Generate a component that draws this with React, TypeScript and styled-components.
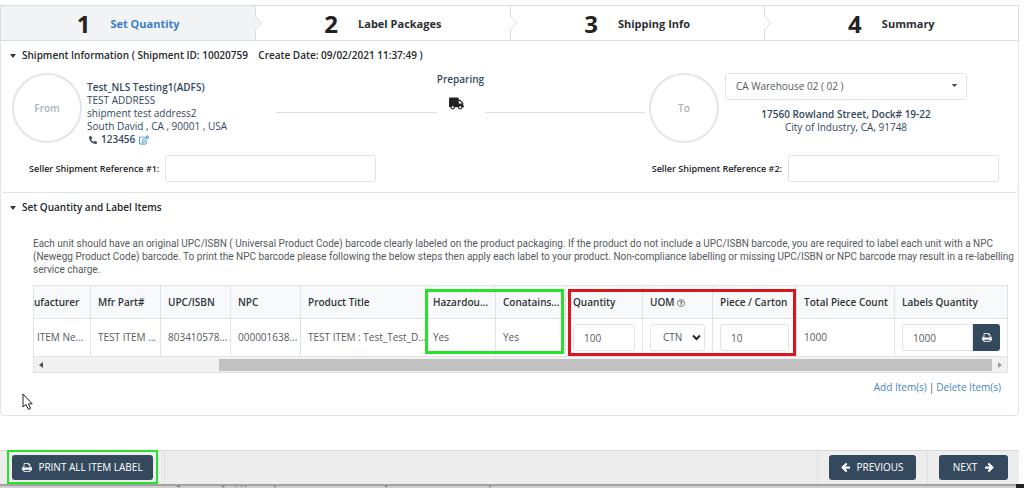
import React from "react";
import styled, { createGlobalStyle } from "styled-components";
import { FaTruck, FaPhoneAlt, FaRegEdit, FaRegQuestionCircle } from "react-icons/fa";

const navy = "#34495e";
const line = "#e1e3e6";

const GlobalStyle = createGlobalStyle`
  * { box-sizing: border-box; }
  body {
    margin: 0;
    background: #fff;
    color: #555a60;
    font: 10px/13px "Open Sans", "Noto Sans", sans-serif;
  }
  input, select, button { font: inherit; color: inherit; }
`;

const Page = styled.div`
  position: relative;
  padding: 5px 5px 0 0;
`;

const Steps = styled.ol`
  display: grid;
  grid-template-columns: repeat(4, 1fr);
  margin: 0;
  padding: 0;
  list-style: none;
  border: 1px solid #dcdee0;
`;

const Step = styled.li<{ $active?: boolean }>`
  position: relative;
  display: flex;
  align-items: center;
  justify-content: center;
  gap: 20px;
  height: 34px;
  background: ${(p) => (p.$active ? "#f1f3f5" : "#fff")};
  color: ${(p) => (p.$active ? "#3f80c4" : "#2b2f33")};
  font-size: 11px;
  font-weight: 700;
  & + & { border-left: 1px solid #dcdee0; }
`;

const StepNumber = styled.span`
  color: #222;
  font-size: 24px;
  font-weight: 700;
`;

const StepArrow = styled.svg`
  position: absolute;
  z-index: 1;
  right: -8px;
  top: 9px;
`;

const Panel = styled.section`
  border: 1px solid ${line};
  border-top-width: 0;
  border-radius: 0 0 4px 4px;
`;

const PanelTitle = styled.h2`
  display: flex;
  align-items: center;
  gap: 6px;
  margin: 0;
  padding: 8px 9px 0;
  color: #24282c;
  font-size: 10px;
  line-height: 13px;
  font-weight: 600;
  white-space: pre;
  &::before {
    content: "";
    border: 3px solid transparent;
    border-top: 4px solid #333;
    border-bottom: 0;
  }
`;

const Route = styled.div`
  display: flex;
  margin-top: 11px;
  padding: 0 51px 0 11px;
`;

const Track = styled.div`
  flex: 1;
  height: 1px;
  margin-top: 39px;
  background: #dcdee0;
`;

const Place = styled.div`
  flex: none;
  display: grid;
  place-items: center;
  width: 70px;
  height: 70px;
  border: 2px solid #e4e5e7;
  border-radius: 50%;
  color: #a9b2bb;
  font-weight: 600;
  ${Track} + & { margin-left: 4px; }
`;

const Origin = styled.address`
  width: 194px;
  padding: 8px 0 0 5px;
  color: ${navy};
  font-style: normal;
  white-space: nowrap;
`;

const Strong = styled.strong`
  font-weight: 600;
`;

const Phone = styled.div`
  display: flex;
  align-items: center;
  gap: 4px;
  padding-left: 2px;
  svg:last-child { color: #3f8fc9; }
`;

const Status = styled.div`
  display: flex;
  flex-direction: column;
  align-items: center;
  gap: 10px;
  width: 48px;
  color: ${navy};
  font-weight: 600;
  svg { color: #222; margin-right: 8px; }
`;

const Destination = styled.div`
  width: 242px;
  margin-left: 6px;
  color: ${navy};
  text-align: center;
`;

const Warehouse = styled.select`
  display: block;
  width: 100%;
  height: 27px;
  margin-bottom: 8px;
  padding: 0 10px;
  border: 1px solid ${line};
  border-radius: 3px;
  background: linear-gradient(#555, #555) no-repeat right 9px top 10px / 5px 1px,
    linear-gradient(#555, #555) no-repeat right 10px top 11px / 3px 1px,
    linear-gradient(#555, #555) no-repeat right 11px top 12px / 1px 1px, #fff;
  color: #555b61;
  appearance: none;
`;

const References = styled.div`
  display: flex;
  justify-content: space-between;
  padding: 9px 19px 10px 28px;
`;

const Reference = styled.label`
  display: flex;
  align-items: center;
  gap: 6px;
  color: #24282c;
  font-size: 9px;
  font-weight: 600;
`;

const TextBox = styled.input<{ $width?: string }>`
  width: ${(p) => p.$width ?? "100%"};
  height: 27px;
  min-width: 0;
  padding: 0 10px;
  border: 1px solid ${line};
  border-radius: 3px;
  background: #fff;
  color: #555b61;
`;

const Note = styled.p`
  margin: 23px 2px 9px 32px;
  font-family: Roboto, "Open Sans", sans-serif;
`;

const GridFrame = styled.div`
  position: relative;
  margin: 0 10px 0 32px;
`;

const Items = styled.table`
  width: 100%;
  table-layout: fixed;
  border-collapse: collapse;
  white-space: nowrap;
  th, td {
    height: 38px;
    padding: 0 7px;
    overflow: hidden;
    border: 1px solid ${line};
    text-align: left;
  }
  th {
    height: 33px;
    background: #f8f9fb;
    color: #2f3439;
    font-weight: 600;
  }
  th:first-child { padding: 0; }
  td:first-child { padding: 0 3px; }
`;

const Col = styled.col<{ $w?: number }>`
  ${(p) => (p.$w ? `width: ${p.$w}px;` : "")}
`;

const Help = styled(FaRegQuestionCircle)`
  color: #666;
  vertical-align: -1px;
`;

const Unit = styled.select`
  width: 100%;
  height: 27px;
  padding: 0 20px 0 12px;
  border: 1px solid ${line};
  border-radius: 3px;
  background: transparent;
  color: #555b61;
  appearance: none;
`;

const UnitField = styled.div`
  position: relative;
  svg { position: absolute; right: 4px; top: 10px; pointer-events: none; }
`;

const LabelField = styled.div`
  display: flex;
  ${TextBox} { flex: 1; border-radius: 3px 0 0 3px; }
`;

const PrintOne = styled.button`
  display: grid;
  place-items: center;
  width: 27px;
  height: 27px;
  padding: 0;
  border: 0;
  border-radius: 0 3px 3px 0;
  background: ${navy};
  color: #fff;
`;

const ScrollBar = styled.div`
  display: flex;
  align-items: center;
  justify-content: space-between;
  height: 16px;
  padding: 0 5px;
  border: 1px solid ${line};
  border-top: 0;
  background: #f1f1f1;
`;

const Thumb = styled.div`
  flex: 1;
  height: 12px;
  margin: 0 6px 0 176px;
  background: #c1c1c1;
`;

const Highlight = styled.div<{ $color: string; $right: number; $w: number; $h: number }>`
  position: absolute;
  top: 4px;
  right: ${(p) => p.$right}px;
  width: ${(p) => p.$w}px;
  height: ${(p) => p.$h}px;
  border: 3px solid ${(p) => p.$color};
  pointer-events: none;
`;

const Actions = styled.div`
  display: flex;
  justify-content: flex-end;
  gap: 2px;
  padding: 8px 17px 21px 0;
`;

const Link = styled.a`
  color: #4586bd;
  text-decoration: none;
`;

const Footer = styled.footer`
  display: flex;
  justify-content: space-between;
  height: 34px;
  margin-top: 34px;
  border-top: 1px solid #d8d8d8;
  background: #ededed;
`;

const FooterCell = styled.div<{ $side: "left" | "right" }>`
  padding: 4px 11px 0 ${(p) => (p.$side === "left" ? 12 : 11)}px;
  border-${(p) => (p.$side === "left" ? "right" : "left")}: 1px solid #e0e0e0;
`;

const FooterGroup = styled.div`
  display: flex;
`;

const Marked = styled.div`
  margin: -5px -5px 0 -5px;
  padding: 3px 3px 2px;
  border: 2px solid #27e22b;
`;

const Button = styled.button<{ $w: number; $gap?: number }>`
  display: flex;
  align-items: center;
  justify-content: center;
  gap: ${(p) => p.$gap ?? 6}px;
  width: ${(p) => p.$w}px;
  height: 25px;
  padding: 0;
  border: 0;
  border-radius: 3px;
  background: ${navy};
  color: #fff;
  white-space: nowrap;
`;

const Backdrop = styled.div`
  display: flex;
  height: 4px;
  margin-right: -5px;
  border-top: 2px solid #a2a2a2;
  background: #cfcfcf;
  &::after {
    content: "";
    width: 8px;
    height: 4px;
    margin: -2px 0 0 auto;
    background: #222;
  }
`;

const Pointer = styled.svg`
  position: absolute;
  left: 22px;
  top: 393px;
`;

const Printer = () => (
  <svg width="10" height="9" viewBox="0 128 1664 1536" fill="currentColor" aria-hidden="true">
    <path d="M384 1536h896v-256h-896v256zM384 896h896v-384h-160q-40 0-68-28t-28-68v-160h-640v640zM1536 960q0-26-19-45t-45-19-45 19-19 45 19 45 45 19 45-19 19-45zM1664 960v416q0 13-9.5 22.5t-22.5 9.5h-224v160q0 40-28 68t-68 28h-960q-40 0-68-28t-28-68v-160h-224q-13 0-22.5-9.5t-9.5-22.5v-416q0-79 56.5-135.5t135.5-56.5h64v-544q0-40 28-68t68-28h672q40 0 88 20t76 48l152 152q28 28 48 76t20 88v256h64q79 0 135.5 56.5t56.5 135.5z" />
  </svg>
);

const Arrow = ({ right = false }: { right?: boolean }) => (
  <svg width="9" height="9" viewBox="0 192 1536 1536" fill="currentColor" aria-hidden="true">
    <path
      transform={right ? "translate(1536 0) scale(-1 1)" : undefined}
      d="M1536 896v128q0 53-32.5 90.5t-84.5 37.5h-704l293 294q38 36 38 90t-38 90l-75 76q-37 37-90 37-52 0-91-37l-651-652q-37-37-37-90 0-52 37-91l651-650q38-38 91-38 52 0 90 38l75 74q38 38 38 91t-38 91l-293 293h704q52 0 84.5 37.5t32.5 90.5z"
    />
  </svg>
);

const steps = ["Set Quantity", "Label Packages", "Shipping Info", "Summary"];
const widths = [57, 70, 70, 70, undefined, 70, 70, 77, 70, 84, 98, 113];

export default function App() {
  return (
    <Page>
      <GlobalStyle />
      <Steps>
        {steps.map((name, i) => (
          <Step key={name} $active={i === 0}>
            <StepNumber>{i + 1}</StepNumber>
            {name}
            {i < 3 && (
              <StepArrow width="9" height="16" viewBox="0 0 9 16">
                <path d="M1 1 L8 8 L1 15" fill={i === 0 ? "#f1f3f5" : "#fff"} stroke="#dcdee0" />
              </StepArrow>
            )}
          </Step>
        ))}
      </Steps>

      <Panel>
        <PanelTitle>{"Shipment Information ( Shipment ID: 10020759    Create Date: 09/02/2021 11:37:49 )"}</PanelTitle>
        <Route>
          <Place>From</Place>
          <Origin>
            <Strong>Test_NLS Testing1(ADFS)</Strong>
            <div>TEST ADDRESS</div>
            <div>shipment test address2</div>
            <div>South David , CA , 90001 , USA</div>
            <Phone>
              <FaPhoneAlt size={8} />
              <Strong>123456</Strong>
              <FaRegEdit size={10} />
            </Phone>
          </Origin>
          <Track />
          <Status>
            Preparing
            <FaTruck size={15} />
          </Status>
          <Track />
          <Place>To</Place>
          <Destination>
            <Warehouse aria-label="Warehouse">
              <option>CA Warehouse 02 ( 02 )</option>
            </Warehouse>
            <Strong>17560 Rowland Street, Dock# 19-22</Strong>
            <div>City of Industry, CA, 91748</div>
          </Destination>
        </Route>
        <References>
          <Reference>
            Seller Shipment Reference #1:
            <TextBox $width="211px" />
          </Reference>
          <Reference>
            Seller Shipment Reference #2:
            <TextBox $width="211px" />
          </Reference>
        </References>
      </Panel>

      <Panel>
        <PanelTitle>Set Quantity and Label Items</PanelTitle>
        <Note>
          Each unit should have an original UPC/ISBN ( Universal Product Code) barcode clearly labeled on the product
          packaging. If the product do not include a UPC/ISBN barcode, you are required to label each unit with a NPC
          (Newegg Product Code) barcode. To print the NPC barcode please following the below steps then apply each
          label to your product. Non-compliance labelling or missing UPC/ISBN or NPC barcode may result in a
          re-labelling service charge.
        </Note>
        <GridFrame>
          <Items>
            <colgroup>
              {widths.map((w, i) => (
                <Col key={i} $w={w} />
              ))}
            </colgroup>
            <thead>
              <tr>
                <th>ufacturer</th>
                <th>Mfr Part#</th>
                <th>UPC/ISBN</th>
                <th>NPC</th>
                <th>Product Title</th>
                <th>Hazardou...</th>
                <th>Conatains...</th>
                <th>Quantity</th>
                <th>
                  UOM <Help size={8} />
                </th>
                <th>Piece / Carton</th>
                <th>Total Piece Count</th>
                <th>Labels Quantity</th>
              </tr>
            </thead>
            <tbody>
              <tr>
                <td>ITEM Ne...</td>
                <td>TEST ITEM ...</td>
                <td>803410578...</td>
                <td>000001638...</td>
                <td>TEST ITEM : Test_Test_D...</td>
                <td>Yes</td>
                <td>Yes</td>
                <td>
                  <TextBox aria-label="Quantity" defaultValue="100" />
                </td>
                <td>
                  <UnitField>
                    <Unit aria-label="UOM">
                      <option>CTN</option>
                    </Unit>
                    <svg width="9" height="7" viewBox="0 0 9 7">
                      <path d="M1 1.5 L4.5 5 L8 1.5" fill="none" stroke="#222" strokeWidth="2" />
                    </svg>
                  </UnitField>
                </td>
                <td>
                  <TextBox aria-label="Piece per carton" defaultValue="10" />
                </td>
                <td>1000</td>
                <td>
                  <LabelField>
                    <TextBox aria-label="Labels quantity" defaultValue="1000" />
                    <PrintOne aria-label="Print label">
                      <Printer />
                    </PrintOne>
                  </LabelField>
                </td>
              </tr>
            </tbody>
          </Items>
          <ScrollBar>
            <svg width="4" height="6" viewBox="0 0 4 6">
              <path d="M4 0 V6 L0 3 Z" fill="#505050" />
            </svg>
            <Thumb />
            <svg width="4" height="6" viewBox="0 0 4 6">
              <path d="M0 0 V6 L4 3 Z" fill="#999" />
            </svg>
          </ScrollBar>
          <Highlight $color="#27e22b" $right={444} $w={139} $h={65} />
          <Highlight $color="#d9161c" $right={212} $w={228} $h={67} />
        </GridFrame>
        <Actions>
          <Link href="#add">Add Item(s)</Link>|<Link href="#delete">Delete Item(s)</Link>
        </Actions>
      </Panel>

      <Footer>
        <FooterCell $side="left">
          <Marked>
            <Button $w={141}>
              <Printer />
              PRINT ALL ITEM LABEL
            </Button>
          </Marked>
        </FooterCell>
        <FooterGroup>
          <FooterCell $side="right">
            <Button $w={87}>
              <Arrow />
              PREVIOUS
            </Button>
          </FooterCell>
          <FooterCell $side="right">
            <Button $w={69} $gap={8}>
              NEXT
              <Arrow right />
            </Button>
          </FooterCell>
        </FooterGroup>
      </Footer>
      <Backdrop>
        <svg width="500" height="2" viewBox="0 0 500 2" stroke="#666" aria-hidden="true">
          <path d="M177 .5h3M222 1l3-1M235 .5h1M241 .5h1M245 .5h1M274 1l2-1M385 .5h2M489 1l2-1" />
        </svg>
      </Backdrop>

      <Pointer width="12" height="18" viewBox="0 0 12 18">
        <path
          d="M1 1 V14 L4 11.5 L6.5 16.5 L8.5 15.5 L6.5 10.8 H10.2 Z"
          fill="#fff"
          stroke="#222"
        />
      </Pointer>
    </Page>
  );
}
